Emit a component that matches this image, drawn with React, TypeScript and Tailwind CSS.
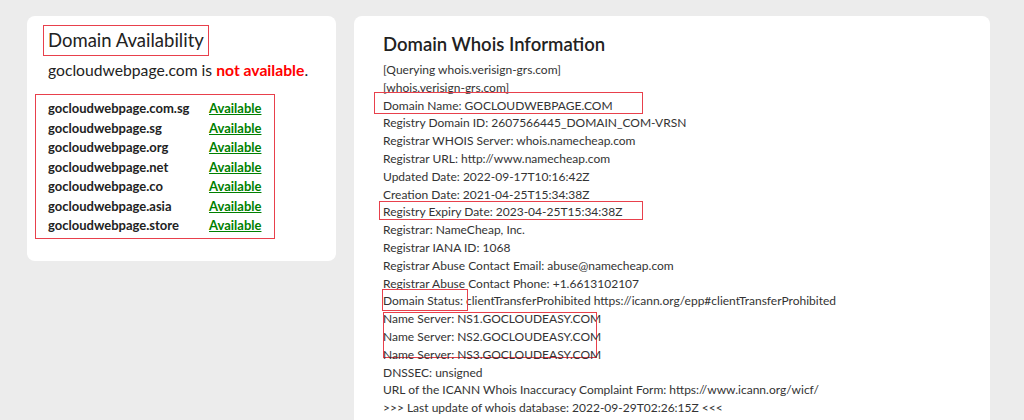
const others = [
  'gocloudwebpage.com.sg',
  'gocloudwebpage.sg',
  'gocloudwebpage.org',
  'gocloudwebpage.net',
  'gocloudwebpage.co',
  'gocloudwebpage.asia',
  'gocloudwebpage.store',
];

type Mark = { i: number; box: string };

const whois = [
  '[Querying whois.verisign-grs.com]',
  '[whois.verisign-grs.com]',
  'Domain Name: GOCLOUDWEBPAGE.COM',
  'Registry Domain ID: 2607566445_DOMAIN_COM-VRSN',
  'Registrar WHOIS Server: whois.namecheap.com',
  'Registrar URL: http://www.namecheap.com',
  'Updated Date: 2022-09-17T10:16:42Z',
  'Creation Date: 2021-04-25T15:34:38Z',
  'Registry Expiry Date: 2023-04-25T15:34:38Z',
  'Registrar: NameCheap, Inc.',
  'Registrar IANA ID: 1068',
  'Registrar Abuse Contact Email: abuse@namecheap.com',
  'Registrar Abuse Contact Phone: +1.6613102107',
  'Domain Status: clientTransferProhibited https://icann.org/epp#clientTransferProhibited',
  'Name Server: NS1.GOCLOUDEASY.COM',
  'Name Server: NS2.GOCLOUDEASY.COM',
  'Name Server: NS3.GOCLOUDEASY.COM',
  'DNSSEC: unsigned',
  'URL of the ICANN Whois Inaccuracy Complaint Form: https://www.icann.org/wicf/',
  '>>> Last update of whois database: 2022-09-29T02:26:15Z <<<',
];

// highlight boxes drawn over the whois lines
const marks: Mark[] = [
  { i: 2, box: 'left-[-9px] top-[-5px] h-[22px] w-[269px]' },
  { i: 8, box: 'left-[-4px] top-[-2px] h-[19px] w-[264px]' },
  { i: 13, box: 'left-[-1px] top-[-3px] h-[22px] w-[86px]' },
  { i: 14, box: 'left-0 top-[2px] h-[46px] w-[214px]' },
];

export default function App() {
  return (
    <div className="h-[420px] overflow-hidden bg-[#ececec] font-['Lato',sans-serif] text-[#333]">
      <div className="flex items-start gap-[18px] pl-[27px] pt-4">
        {/* availability card */}
        <div className="w-[309px] rounded-lg bg-white pb-[22px]">
          <div className="pl-4 pt-[9px]">
            <h2 className="inline-block border-[1.5px] border-[#e8404c] px-[4px] py-[2px] text-[18.5px] leading-[25px] text-[#222]">
              Domain Availability
            </h2>
          </div>
          <p className="mt-[2px] pl-[21px] text-[15.7px] leading-[24px] text-[#222]">
            gocloudwebpage.com is <span className="font-bold text-[#ff0000]">not available</span>.
          </p>
          <div className="mt-[12px] ml-2 w-[240px] border-[1.5px] border-[#e8404c] pb-[2px] pl-[12px] pt-[4px]">
            {others.map((d) => (
              <div key={d} className="flex h-[19.5px] items-center text-[13px] font-bold text-[#222]">
                <span className="w-[161px]">{d}</span>
                <a href="#" className="text-[#008000] underline">Available</a>
              </div>
            ))}
          </div>
        </div>

        {/* whois card */}
        <div className="w-[636px] rounded-lg bg-white pl-[29px] pt-4 pb-8">
          <h2 className="text-[18.5px] font-semibold leading-[24px] text-[#222]">Domain Whois Information</h2>
          <div className="mt-[5px]">
            {whois.map((l, i) => {
              const m = marks.find((k) => k.i === i);
              return (
                <div key={i} className="relative h-[17.8px] text-[12px] leading-[17.8px] whitespace-nowrap">
                  {l}
                  {m && <div className={`absolute border-[1.5px] border-[#e8404c] ${m.box}`} />}
                </div>
              );
            })}
          </div>
        </div>
      </div>
    </div>
  );
}
